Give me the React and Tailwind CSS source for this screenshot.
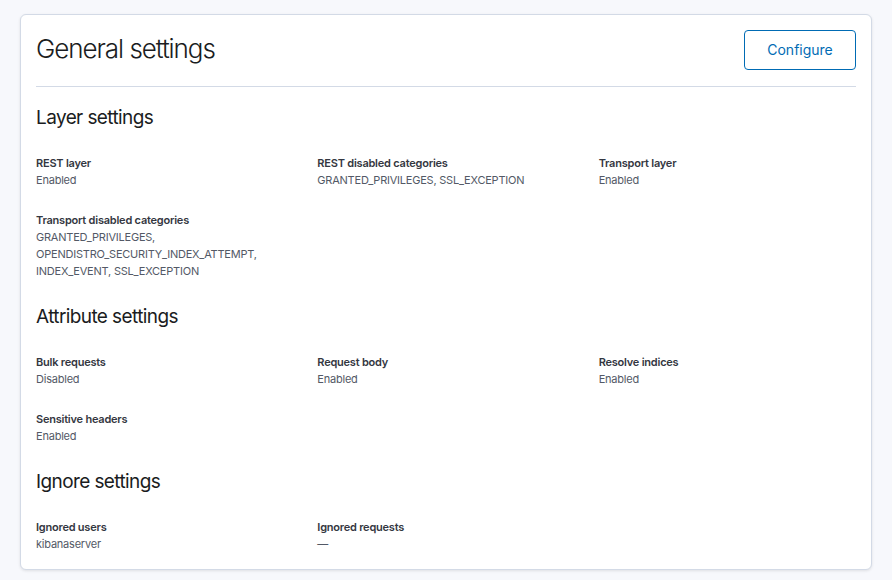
const sections = [
  {
    title: "Layer settings",
    fields: [
      { label: "REST layer", value: ["Enabled"] },
      { label: "REST disabled categories", value: ["GRANTED_PRIVILEGES, SSL_EXCEPTION"] },
      { label: "Transport layer", value: ["Enabled"] },
      {
        label: "Transport disabled categories",
        value: ["GRANTED_PRIVILEGES,", "OPENDISTRO_SECURITY_INDEX_ATTEMPT,", "INDEX_EVENT, SSL_EXCEPTION"],
      },
    ],
  },
  {
    title: "Attribute settings",
    fields: [
      { label: "Bulk requests", value: ["Disabled"] },
      { label: "Request body", value: ["Enabled"] },
      { label: "Resolve indices", value: ["Enabled"] },
      { label: "Sensitive headers", value: ["Enabled"] },
    ],
  },
  {
    title: "Ignore settings",
    fields: [
      { label: "Ignored users", value: ["kibanaserver"] },
      { label: "Ignored requests", value: ["—"] },
    ],
  },
];

function Field({ label, value }) {
  return (
    <div className="text-[11px] leading-[17px] tracking-[-0.22px]">
      <div className="font-semibold text-[#343741]">{label}</div>
      {value.map((line) => (
        <div key={line} className="text-[#535966]">
          {line}
        </div>
      ))}
    </div>
  );
}

export default function App() {
  return (
    <div
      className="min-h-screen bg-[#f7f8fc] px-[20px] pt-[14px] pb-[10px]"
      style={{ fontFamily: "Inter, 'Noto Sans', sans-serif" }}
    >
      <div className="bg-white border border-[#d3dae6] rounded-[6px] shadow-[0_1px_3px_rgba(0,0,0,0.1)] px-[15px] pt-[15px] pb-[16px]">
        {/* Header */}
        <div className="flex justify-between items-start h-[40px]">
          <h1 className="text-[26px] leading-[38px] font-light tracking-[-1.05px] text-[#1a1c21]">General settings</h1>
          <button className="h-[40px] w-[112px] pb-[2px] border border-[#006bb4] rounded-[4px] text-[14px] text-[#006bb4] bg-white">
            Configure
          </button>
        </div>
        <div className="mt-[16px] h-px bg-[#d3dae6]" />

        {sections.map((s, i) => (
          <div key={s.title} className={i === 0 ? "mt-[17px]" : "mt-[23px]"}>
            <h2 className="text-[19px] leading-[28px] tracking-[-0.6px] text-[#1a1c21]">{s.title}</h2>
            <div className="grid grid-cols-3 gap-x-[24px] gap-y-[23px] mt-[23px]">
              {s.fields.map((f) => (
                <Field key={f.label} {...f} />
              ))}
            </div>
          </div>
        ))}
      </div>
    </div>
  );
}
